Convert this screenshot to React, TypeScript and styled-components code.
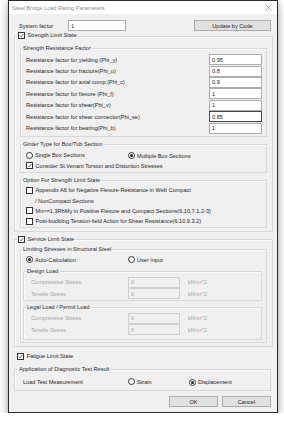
import React from 'react';
import styled, { createGlobalStyle } from 'styled-components';

const GlobalStyle = createGlobalStyle`
  html, body {
    margin: 0;
    padding: 0;
    background: #ffffff;
  }
  body {
    font-family: 'Liberation Sans', Arial, sans-serif;
    font-size: 5.6px;
    color: #1e1e1e;
  }
`;

type CheckProps = { checked?: boolean; disabled?: boolean; children: React.ReactNode };

const Check = ({ checked, disabled, children }: CheckProps) => (
  <Choice $disabled={disabled}>
    <CheckBox>
      {checked && (
        <svg width="5" height="5" viewBox="0 0 10 10">
          <path d="M1.5 5.2 L4 7.8 L8.8 2" fill="none" stroke="#333" strokeWidth="1.4" />
        </svg>
      )}
    </CheckBox>
    <span>{children}</span>
  </Choice>
);

const Radio = ({ checked, disabled, children }: CheckProps) => (
  <Choice $disabled={disabled} $gap={2}>
    <RadioCircle>{checked && <RadioDot />}</RadioCircle>
    <span>{children}</span>
  </Choice>
);

const resistance = [
  { label: 'Resistance factor for yielding (Phi_y)', value: '0.95' },
  { label: 'Resistance factor for fracture(Phi_u)', value: '0.8' },
  { label: 'Resistance factor for axial comp.(Phi_c)', value: '0.9' },
  { label: 'Resistance factor for flexure (Phi_f)', value: '1' },
  { label: 'Resistance factor for shear(Phi_v)', value: '1' },
  { label: 'Resistance factor for shear connector(Phi_se)', value: '0.85', focus: true },
  { label: 'Resistance factor for bearing(Phi_b)', value: '1' },
];

const StressGroup = ({ title, mt }: { title: string; mt: number }) => (
  <Group $mt={mt} $ml={2} $mr={4}>
    <Legend $ml={2}>{title}</Legend>
    <GroupBody $pt={1} $pb={title === 'Design Load' ? 1 : 4} $pl={7}>
      {['Compressive Stress', 'Tensile Stress'].map((s) => (
        <Row key={s} $h={11.5}>
          <Cell $w={97} $disabled>{s}</Cell>
          <TextBox $w={52} $disabled>0</TextBox>
          <Unit>kN/m^2</Unit>
        </Row>
      ))}
    </GroupBody>
  </Group>
);

export default function App() {
  return (
    <>
      <GlobalStyle />
      <Window>
        <TitleBar>
          <span>Steel Bridge Load Rating Parameters</span>
          <svg width="7" height="7" viewBox="0 0 7 7">
            <path d="M0.5 0.5 L6.5 6.5 M6.5 0.5 L0.5 6.5" stroke="#8a8a8a" strokeWidth="0.7" />
          </svg>
        </TitleBar>
        <Body>
          <TopRow>
            <Cell $w={49}>System factor</Cell>
            <TextBox $w={58}>1</TextBox>
            <Spacer />
            <Button $w={77}>Update by Code</Button>
          </TopRow>

          <Group $mt={1}>
            <Legend $ml={2}>
              <Check checked>Strength Limit State</Check>
            </Legend>
            <GroupBody $pt={5} $pb={3} $pl={5} $pr={5}>
              <Group>
                <Legend $ml={1}>Strength Resistance Factor</Legend>
                <GroupBody $pt={2} $pb={2.5} $pl={5} $pr={4}>
                  {resistance.map((r) => (
                    <Row key={r.label} $h={11.4}>
                      <Cell $grow>{r.label}</Cell>
                      <TextBox $w={53} $focus={r.focus}>{r.value}</TextBox>
                    </Row>
                  ))}
                </GroupBody>
              </Group>

              <Group $mt={4}>
                <Legend $ml={1}>Girder Type for Box/Tub Section</Legend>
                <GroupBody $pt={2.5} $pb={1.5} $pl={5}>
                  <Row $h={10}>
                    <Cell $w={102}>
                      <Radio>Single Box Sections</Radio>
                    </Cell>
                    <Radio checked>Multiple Box Sections</Radio>
                  </Row>
                  <Row $h={10}>
                    <Check checked>Consider St.Venant Torsion and Distortion Stresses</Check>
                  </Row>
                </GroupBody>
              </Group>

              <Group $mt={3.5}>
                <Legend $ml={1}>Option For Strength Limit State</Legend>
                <GroupBody $pt={1.5} $pb={1} $pl={5}>
                  <Row $h={10.3}>
                    <Check>Appendix A6 for Negative Flexure Resistance in Web Compact</Check>
                  </Row>
                  <Row $h={10.3} $pl={9}>/ NonCompact Sections</Row>
                  <Row $h={10.3}>
                    <Check>Mn&lt;=1.3RhMy in Positive Flexure and Compact Sections(6.10.7.1.2-3)</Check>
                  </Row>
                  <Row $h={10.3}>
                    <Check>Post-buckling Tension-field Action for Shear Resistance(6.10.9.3.2)</Check>
                  </Row>
                </GroupBody>
              </Group>
            </GroupBody>
          </Group>

          <Group $mt={3.5}>
            <Legend $ml={2}>
              <Check checked>Service Limit State</Check>
            </Legend>
            <GroupBody $pt={2.5} $pb={3} $pl={5} $pr={5}>
              <Group>
                <Legend $ml={1}>Limiting Stresses in Structural Steel</Legend>
                <GroupBody $pt={1.5} $pb={2}>
                  <Row $h={10} $pl={5}>
                    <Cell $w={102}>
                      <Radio checked>Auto-Calculation</Radio>
                    </Cell>
                    <Radio>User Input</Radio>
                  </Row>
                  <StressGroup title="Design Load" mt={3.5} />
                  <StressGroup title="Legal Load / Permit Load" mt={3} />
                </GroupBody>
              </Group>
            </GroupBody>
          </Group>

          <Row $h={8} $pl={3} $mt={5}>
            <Check checked>Fatigue Limit State</Check>
          </Row>

          <Group $mt={5.5} $mr={2}>
            <Legend $ml={3}>Application of Diagnostic Test Result</Legend>
            <GroupBody $pt={4.5} $pb={3} $pl={8}>
              <Row $h={10}>
                <Cell $w={105}>Load Test Measurement</Cell>
                <Cell $w={61}>
                  <Radio>Strain</Radio>
                </Cell>
                <Radio checked>Displacement</Radio>
              </Row>
            </GroupBody>
          </Group>

          <ButtonBar>
            <Button $w={49}>OK</Button>
            <Button $w={49}>Cancel</Button>
          </ButtonBar>
        </Body>
      </Window>
    </>
  );
}

const Window = styled.div`
  box-sizing: border-box;
  width: 270px;
  height: 413px;
  margin-left: 8px;
  border: 1px solid #2a2a2a;
  background: #f0f0f0;
  box-shadow: 0 4px 9px rgba(0, 0, 0, 0.3), 0 0 5px rgba(0, 0, 0, 0.15);
  display: flex;
  flex-direction: column;
`;

const TitleBar = styled.div`
  height: 13px;
  flex: none;
  background: #ffffff;
  color: #8c8c8c;
  display: flex;
  align-items: center;
  justify-content: space-between;
  padding: 0 5px 0 3px;
`;

const Body = styled.div`
  display: flex;
  flex-direction: column;
  padding: 0 4px 0 5px;
`;

const TopRow = styled.div`
  display: flex;
  align-items: center;
  height: 11px;
  margin-top: 6px;
  padding: 0 2px 0 5px;
`;

const Spacer = styled.div`
  flex: 1;
`;

const Group = styled.fieldset<{ $mt?: number; $ml?: number; $mr?: number }>`
  margin: ${(p) => p.$mt ?? 0}px ${(p) => p.$mr ?? 0}px 0 ${(p) => p.$ml ?? 0}px;
  padding: 0;
  min-width: 0;
  border: 1px solid #d8d8d8;
  box-shadow: inset 1px 1px 0 #fbfbfb;
`;

const Legend = styled.legend<{ $ml?: number }>`
  margin-left: ${(p) => p.$ml ?? 1}px;
  padding: 0 1px;
  line-height: 7px;
  white-space: nowrap;
`;

const GroupBody = styled.div<{ $pt?: number; $pb?: number; $pl?: number; $pr?: number }>`
  display: flex;
  flex-direction: column;
  padding: ${(p) => p.$pt ?? 0}px ${(p) => p.$pr ?? 0}px ${(p) => p.$pb ?? 0}px ${(p) => p.$pl ?? 0}px;
`;

const Row = styled.div<{ $h?: number; $pl?: number; $mt?: number }>`
  display: flex;
  align-items: center;
  height: ${(p) => p.$h ?? 10}px;
  padding-left: ${(p) => p.$pl ?? 0}px;
  margin-top: ${(p) => p.$mt ?? 0}px;
  white-space: nowrap;
`;

const Cell = styled.div<{ $w?: number; $grow?: boolean; $disabled?: boolean }>`
  flex: ${(p) => (p.$grow ? '1' : 'none')};
  width: ${(p) => (p.$w ? `${p.$w}px` : 'auto')};
  color: ${(p) => (p.$disabled ? '#a3a3a3' : 'inherit')};
  overflow: hidden;
  white-space: nowrap;
`;

const TextBox = styled.div<{ $w?: number; $disabled?: boolean; $focus?: boolean }>`
  box-sizing: border-box;
  flex: none;
  width: ${(p) => p.$w ?? 52}px;
  height: 11px;
  display: flex;
  align-items: center;
  padding-left: 2px;
  background: ${(p) => (p.$disabled ? '#f0f0f0' : '#ffffff')};
  border: 1px solid ${(p) => (p.$focus ? '#474747' : p.$disabled ? '#d0d0d0' : '#acacac')};
  color: ${(p) => (p.$disabled ? '#a3a3a3' : '#1e1e1e')};
`;

const Unit = styled.span`
  margin-left: 8px;
  color: #a3a3a3;
`;

const Button = styled.div<{ $w: number }>`
  box-sizing: border-box;
  width: ${(p) => p.$w}px;
  height: 11px;
  display: flex;
  align-items: center;
  justify-content: center;
  background: #e1e1e1;
  border: 1px solid #adadad;
`;

const ButtonBar = styled.div`
  display: flex;
  justify-content: flex-end;
  gap: 4px;
  margin-top: 5px;
  padding-right: 2px;
`;

const Choice = styled.span<{ $disabled?: boolean; $gap?: number }>`
  display: inline-flex;
  align-items: center;
  gap: ${(p) => p.$gap ?? 2.5}px;
  color: ${(p) => (p.$disabled ? '#a3a3a3' : 'inherit')};
  white-space: nowrap;
`;

const CheckBox = styled.span`
  box-sizing: border-box;
  width: 7px;
  height: 7px;
  border: 1px solid #333333;
  background: #ffffff;
  display: inline-flex;
  align-items: center;
  justify-content: center;
`;

const RadioCircle = styled.span`
  box-sizing: border-box;
  width: 7px;
  height: 7px;
  border: 1px solid #333333;
  border-radius: 50%;
  background: #ffffff;
  display: inline-flex;
  align-items: center;
  justify-content: center;
`;

const RadioDot = styled.span`
  width: 3px;
  height: 3px;
  border-radius: 50%;
  background: #222222;
`;
